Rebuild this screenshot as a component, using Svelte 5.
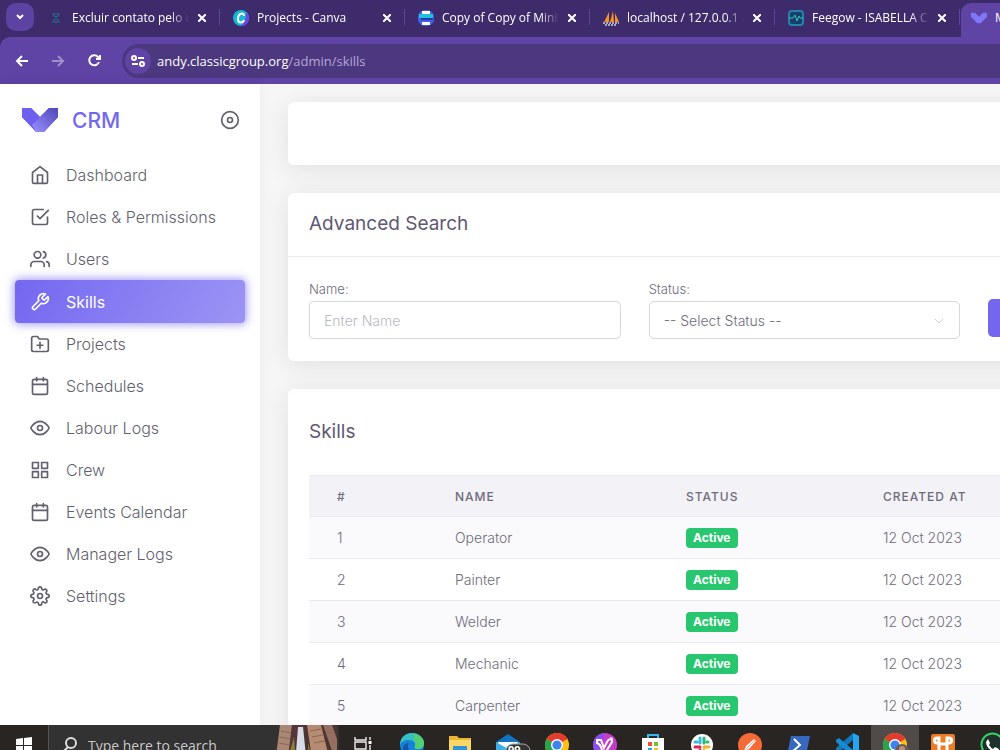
<script>
	let name = '';
	let status = '';
	let search = '';

	const tabs = [
		{ icon: 'strikes', title: 'Excluir contato pelo u' },
		{ icon: 'canva', title: 'Projects - Canva' },
		{ icon: 'printer', title: 'Copy of Copy of Mini' },
		{ icon: 'pma', title: 'localhost / 127.0.0.1 /' },
		{ icon: 'feegow', title: 'Feegow - ISABELLA C' }
	];

	const calendar =
		'<rect x="3" y="4" width="18" height="18" rx="2"/><path d="M16 2v4M8 2v4M3 10h18"/>';
	const eye =
		'<path d="M1 12s4-8 11-8 11 8 11 8-4 8-11 8-11-8-11-8z"/><circle cx="12" cy="12" r="3"/>';

	const menu = [
		{
			label: 'Dashboard',
			icon: '<path d="M3 9l9-7 9 7v11a2 2 0 0 1-2 2H5a2 2 0 0 1-2-2z"/><path d="M9 22V12h6v10"/>'
		},
		{
			label: 'Roles & Permissions',
			icon: '<path d="M9 11l3 3L22 4"/><path d="M21 12v7a2 2 0 0 1-2 2H5a2 2 0 0 1-2-2V5a2 2 0 0 1 2-2h11"/>'
		},
		{
			label: 'Users',
			icon: '<path d="M17 21v-2a4 4 0 0 0-4-4H5a4 4 0 0 0-4 4v2"/><circle cx="9" cy="7" r="4"/><path d="M23 21v-2a4 4 0 0 0-3-3.87M16 3.13a4 4 0 0 1 0 7.75"/>'
		},
		{
			label: 'Skills',
			active: true,
			icon: '<path d="M14.7 6.3a1 1 0 0 0 0 1.4l1.6 1.6a1 1 0 0 0 1.4 0l3.77-3.77a6 6 0 0 1-7.94 7.94l-6.91 6.91a2.12 2.12 0 0 1-3-3l6.91-6.91a6 6 0 0 1 7.94-7.94l-3.76 3.76z"/>'
		},
		{
			label: 'Projects',
			icon: '<path d="M22 19a2 2 0 0 1-2 2H4a2 2 0 0 1-2-2V5a2 2 0 0 1 2-2h5l2 3h9a2 2 0 0 1 2 2z"/><path d="M12 10v7M8.5 13.5h7"/>'
		},
		{ label: 'Schedules', icon: calendar },
		{ label: 'Labour Logs', icon: eye },
		{
			label: 'Crew',
			icon: '<path d="M3 3h7v7H3zM14 3h7v7h-7zM14 14h7v7h-7zM3 14h7v7H3z"/>'
		},
		{ label: 'Events Calendar', icon: calendar },
		{ label: 'Manager Logs', icon: eye },
		{
			label: 'Settings',
			icon: '<circle cx="12" cy="12" r="3"/><path d="M19.4 15a1.65 1.65 0 0 0 .33 1.82l.06.06a2 2 0 1 1-2.83 2.83l-.06-.06a1.65 1.65 0 0 0-2.8 1.17V21a2 2 0 0 1-4 0v-.09A1.65 1.65 0 0 0 9 19.4a1.65 1.65 0 0 0-1.82.33l-.06.06a2 2 0 1 1-2.83-2.83l.06-.06A1.65 1.65 0 0 0 3.09 14H3a2 2 0 0 1 0-4h.09A1.65 1.65 0 0 0 4.6 9a1.65 1.65 0 0 0-.33-1.82l-.06-.06a2 2 0 1 1 2.83-2.83l.06.06A1.65 1.65 0 0 0 9 4.6a1.65 1.65 0 0 0 1-1.51V3a2 2 0 0 1 4 0v.09a1.65 1.65 0 0 0 2.73 1.24l.06-.06a2 2 0 1 1 2.83 2.83l-.06.06A1.65 1.65 0 0 0 19.4 9a1.65 1.65 0 0 0 1.51 1H21a2 2 0 0 1 0 4h-.09a1.65 1.65 0 0 0-1.51 1z"/>'
		}
	];

	const skills = [
		{ id: 1, name: 'Operator', created: '12 Oct 2023' },
		{ id: 2, name: 'Painter', created: '12 Oct 2023' },
		{ id: 3, name: 'Welder', created: '12 Oct 2023' },
		{ id: 4, name: 'Mechanic', created: '12 Oct 2023' },
		{ id: 5, name: 'Carpenter', created: '12 Oct 2023' }
	];

	const chrome =
		'<circle cx="12" cy="12" r="12" fill="#fbc116"/><path d="M12 12L1.6 6A12 12 0 0 1 22.4 6z" fill="#e33b2e"/><path d="M12 0a12 12 0 0 1 10.4 6H12z" fill="#e33b2e"/><path d="M1.6 6A12 12 0 0 0 12 24l5-9-5-3z" fill="#2ba24c"/><circle cx="12" cy="12" r="6" fill="#fff"/><circle cx="12" cy="12" r="4.6" fill="#3f83f0"/>';

	const apps = [
		{
			name: 'Task View',
			icon: '<path d="M4 4v3h11V4M4 21v-3h11v3M4 9h11v7H4zM19 4v3M19 12v9" fill="none" stroke="#eee" stroke-width="1.4"/><path d="M17.500 8h3v3h-3z" fill="#fff"/>'
		},
		{
			name: 'Edge',
			icon: '<circle cx="12" cy="12" r="12" fill="#1683d8"/><path d="M0 12C0 4 6 0 12 0c7 0 12 5 12 10 0 4-3 6-6 6-3 0-4-1-3-3 1-3-2-6-6-6-5 0-8 2-9 5z" fill="#35c1c4"/><path d="M14 1c6 1 10 5 10 9 0 4-3 6-6 6-3 0-4-1-3-3 1-2 1-4-1-6z" fill="#55d070"/><path d="M9 10c-3 4 0 11 9 10-4 4-10 4-13 1-4-4-2-11 4-11z" fill="#1356a5"/>'
		},
		{
			name: 'File Explorer',
			icon: '<path d="M1 3h8l2 2h12v18H1z" fill="#eeb52f"/><path d="M1 7h22v16H1z" fill="#fbd866"/><path d="M5 13h14v10h-3v-5H8v5H5z" fill="#3493d4"/>'
		},
		{
			name: 'Mail',
			icon: '<path d="M0 9L12 1l12 8v14H0z" fill="#1171c2"/><path d="M2 9h20v13H2z" fill="#f6fbff"/><path d="M0 9l12 7 12-7v14H0z" fill="#42aee8"/><rect x="10" y="11" width="24" height="14" rx="7" fill="#333" stroke="#aaa"/><text x="12" y="21" font-size="11" font-weight="700" font-family="Open Sans, sans-serif" fill="#fff">99</text>'
		},
		{ name: 'Chrome', icon: chrome },
		{
			name: 'WPS',
			icon: '<circle cx="12" cy="12" r="12" fill="#c63cc8"/><path d="M12 0a12 12 0 0 0-12 12c0 4 2 7 4 9z" fill="#8650ed"/><path d="M4 7h4l3 8 3-6c2-4 6-3 5 0l-5 8c-2 3-4 3-5 0-1-4-2-6-5-7z" fill="none" stroke="#fff" stroke-width="2"/><path d="M17 4l3 1-1 3z" fill="#fff"/>'
		},
		{
			name: 'Store',
			icon: '<path d="M7 6V2h10v4" fill="none" stroke="#37b6ee" stroke-width="2"/><path d="M1 5h22v15q0 3-3 3H4q-3 0-3-3z" fill="#fff"/><path d="M7 9h4v4H7z" fill="#ee5037"/><path d="M13 9h4v4h-4z" fill="#80bd2c"/><path d="M7 15h4v4H7z" fill="#29a6e8"/><path d="M13 15h4v4h-4z" fill="#fcba26"/>'
		},
		{
			name: 'Slack',
			icon: '<circle cx="12" cy="12" r="11" fill="#fff"/><g stroke-width="3" stroke-linecap="round"><path d="M10 5v5M5 9h2" stroke="#36b9e8"/><path d="M14 5v5M17 9h1" stroke="#2eb67d"/><path d="M14 14h5M14 17v2" stroke="#ecb22e"/><path d="M5 14h5M10 17v2" stroke="#d92558"/></g>'
		},
		{
			name: 'Postman',
			icon: '<circle cx="12" cy="12" r="12" fill="#f46b37"/><path d="M6 18l2-5 8-7 2 2-7 8z" fill="#fff"/><path d="M8 16l9-9" stroke="#f9a586"/>'
		},
		{
			name: 'PowerShell',
			icon: '<path d="M5 3h19l-4 19H1z" fill="#3868bd"/><path d="M8 6l6 6-8 7M13 19h5" fill="none" stroke="#fff" stroke-width="2"/>'
		},
		{
			name: 'VS Code',
			icon: '<path d="M18 0l6 3v18l-6 3z" fill="#27a4ee"/><path d="M18 0v7L4 19l-3-2v-2z" fill="#1178be"/><path d="M18 24v-7L4 5L1 7v2z" fill="#168bd4"/>'
		},
		{
			name: 'Chrome profile',
			active: true,
			icon: chrome + '<circle cx="19" cy="18" r="7" fill="#685b56"/><circle cx="19" cy="16" r="3" fill="#bd8f78"/>'
		},
		{
			name: 'XAMPP',
			icon: '<rect y="1" width="24" height="23" rx="2" fill="#ec7d28"/><path d="M8 10H6a2 2 0 0 1 0-5h2v14M16 10h2a2 2 0 0 0 0-5h-2v14M8 11h8" fill="none" stroke="#fff" stroke-width="3"/>'
		},
		{
			name: 'WhatsApp',
			icon: '<path d="M1 23l2-6a11 11 0 1 1 4 4z" fill="#20302a" stroke="#32d468" stroke-width="2"/><path d="M8 6l2 4-1 2q2 3 4 4l2-2 4 2c-2 7-13 0-13-7z" fill="#fff"/>'
		}
	];
</script>

<div class="screen">
	<header class="browser">
		<div class="tabstrip">
			<button class="tab-search" aria-label="Search tabs">
				<svg width="10" height="10" viewBox="0 0 10 10"><path d="M2 3l3 3 3-3" /></svg>
			</button>
			{#each tabs as tab}
				<div class="tab">
					<svg class="favicon" width="16" height="16" viewBox="0 0 16 16">
						{#if tab.icon === 'strikes'}
							<path d="M4 4h8M5 5l2 2h2l2-2M4 12h8M5 11l2-2h2l2 2" fill="none" stroke="#1a7896" />
						{:else if tab.icon === 'canva'}
							<circle cx="8" cy="8" r="8" fill="#13b8d6" />
							<path d="M13 2a8 8 0 0 1-6 14c5-2 6-8 6-14z" fill="#7540ec" />
							<path d="M11 6c0-4-6-3-6 3 0 5 5 4 6 1" fill="none" stroke="#fff" stroke-width="2" />
						{:else if tab.icon === 'printer'}
							<rect width="16" height="16" rx="7" fill="#465de8" />
							<path d="M1 4h14v4H1z" fill="#20bfdc" />
							<path d="M4 1h8v3H4zM4 12h8v3H4z" fill="#fff" />
							<path d="M3 9h12" stroke="#263ca5" stroke-width="2" />
						{:else if tab.icon === 'pma'}
							<path d="M1 12L6 2v10zM7 12l3-11 1 11zM12 12V3l4 9z" fill="#f29228" />
							<path d="M0 13h16M2 15h12" stroke="#aaa6bc" stroke-width="2" stroke-dasharray="2 1" />
						{:else}
							<rect x="1" y="1" width="14" height="14" rx="3" fill="#173f69" stroke="#2583ab" stroke-width="2" />
							<path d="M1 8h4l2-3 2 6 2-5 1 2h3" fill="none" stroke="#35bfc4" stroke-width="1" />
						{/if}
					</svg>
					<span class="tab-title">{tab.title}</span>
					<button class="tab-close" aria-label="Close tab">
						<svg width="8" height="8" viewBox="0 0 8 8"><path d="M0 0l8 8M8 0L0 8" /></svg>
					</button>
				</div>
			{/each}
			<div class="tab current">
				<svg class="favicon" width="16" height="16" viewBox="0 0 36 36">
					<path d="M0 6h9l9 9 9-9h9v9L22 30h-8L0 15z" fill="#7d78f5" />
				</svg>
				<span class="tab-title">M</span>
			</div>
		</div>

		<div class="toolbar">
			<button aria-label="Back">
				<svg width="16" height="16" viewBox="0 0 16 16"><path d="M14 8H3M8 3L3 8l5 5" /></svg>
			</button>
			<button aria-label="Forward" disabled>
				<svg width="16" height="16" viewBox="0 0 16 16"><path d="M2 8h11M8 3l5 5-5 5" /></svg>
			</button>
			<button aria-label="Reload">
				<svg width="16" height="16" viewBox="0 0 16 16">
					<path d="M13 9a5 5 0 1 1-1-5l2 2M14 2v4h-4" />
				</svg>
			</button>
			<div class="omnibox">
				<button class="site-info" aria-label="View site information">
					<svg width="14" height="14" viewBox="0 0 14 14">
						<circle cx="3" cy="4" r="2" /><path d="M7 4h6M1 10h6" /><circle cx="11" cy="10" r="2" />
					</svg>
				</button>
				<span class="url">andy.classicgroup.org<span class="path">/admin/skills</span></span>
			</div>
		</div>
	</header>

	<div class="page">
		<aside class="sidebar">
			<div class="sidebar-head">
				<a class="brand" href="#home">
					<svg width="36" height="24" viewBox="0 0 36 24">
						<defs>
							<linearGradient id="brand-shade" x1="1" y1="0" x2="0" y2="1">
								<stop offset="0" stop-color="#4f45b5" />
								<stop offset="1" stop-color="#9a92ff" />
							</linearGradient>
						</defs>
						<path d="M0 0h9l9 9 9-9h9v9L22 24h-8L0 9z" fill="#6156d8" />
						<path d="M0 0h9l9 9-8 10L0 9z" fill="#6f5ff0" />
						<path d="M10 17L27 0h9v9L22 24h-8z" fill="url(#brand-shade)" />
					</svg>
					<span>CRM</span>
				</a>
				<button class="pin" aria-label="Toggle menu">
					<svg class="feather" width="20" height="20" viewBox="0 0 24 24">
						<circle cx="12" cy="12" r="10" /><circle cx="12" cy="12" r="3" />
					</svg>
				</button>
			</div>
			<nav>
				{#each menu as item}
					<a class="nav-item" class:active={item.active} href="#{item.label}">
						<svg class="feather" width="20" height="20" viewBox="0 0 24 24">{@html item.icon}</svg>
						<span>{item.label}</span>
					</a>
				{/each}
			</nav>
		</aside>

		<main>
			<div class="content">
				<section class="card blank"></section>

				<section class="card">
					<h4 class="card-header">Advanced Search</h4>
					<form class="filters" on:submit|preventDefault>
						<div class="field">
							<label for="name">Name:</label>
							<input type="text" id="name" placeholder="Enter Name" bind:value={name} />
						</div>
						<div class="field">
							<label for="status">Status:</label>
							<div class="select">
								<select id="status" bind:value={status}>
									<option value="">-- Select Status --</option>
								</select>
								<svg width="10" height="10" viewBox="0 0 10 10"><path d="M1 3l4 4 4-4" /></svg>
							</div>
						</div>
						<button class="btn-search" type="submit" aria-label="Search"></button>
					</form>
				</section>

				<section class="card list">
					<h4>Skills</h4>
					<table>
						<thead>
							<tr>
								<th class="col-id">#</th>
								<th class="col-name">Name</th>
								<th class="col-status">Status</th>
								<th>Created At</th>
							</tr>
						</thead>
						<tbody>
							{#each skills as skill}
								<tr>
									<td>{skill.id}</td>
									<td>{skill.name}</td>
									<td><span class="badge">Active</span></td>
									<td>{skill.created}</td>
								</tr>
							{/each}
						</tbody>
					</table>
				</section>
			</div>
		</main>
	</div>

	<footer class="taskbar">
		<button class="start" aria-label="Start">
			<svg width="16" height="16" viewBox="0 0 16 16">
				<path d="M0 2l7-1v7H0zM8 1l8-1v8H8zM0 9h7v6l-7-1zM8 9h8v7l-8-1z" fill="#fff" />
			</svg>
		</button>
		<div class="search">
			<svg width="16" height="16" viewBox="0 0 16 16">
				<circle cx="9" cy="6" r="5" /><path d="M6 10l-5 5" />
			</svg>
			<input type="text" aria-label="Search" placeholder="Type here to search" bind:value={search} />
			<svg class="highlight" width="62" height="40" viewBox="0 0 62 40">
				<path d="M0 0h62v40H0z" fill="#4b3530" />
				<path d="M0 0h5L0 28z" fill="#323232" />
				<path d="M5 0h12l-3 40H0z" fill="#a98774" />
				<path d="M17 0h13l-2 40H12z" fill="#55343a" />
				<path d="M23 2l5 0 4 38H20z" fill="#d8dce6" />
				<path d="M32 0h14l10 40H38z" fill="#b58b73" />
				<path d="M48 0h9l5 14v26z" fill="#957060" />
				<path d="M14 30l5-18 2 28zM34 40l-1-22 6 22z" fill="#8b8137" />
				<path class="bands" d="M6 6l10 2M5 12l10 2M4 18l10 2M35 6l11-2M37 12l11-2M39 18l11-2M52 8l6-1" />
			</svg>
		</div>
		<div class="apps">
			{#each apps as app}
				<button class="app" class:active={app.active} aria-label={app.name}>
					<svg width="24" height="24" viewBox="0 0 24 24">{@html app.icon}</svg>
				</button>
			{/each}
		</div>
	</footer>
</div>

<style>
	:global(body) {
		margin: 0;
	}
	* {
		box-sizing: border-box;
	}
	button,
	input,
	select {
		font: inherit;
		margin: 0;
	}
	button {
		display: flex;
		align-items: center;
		justify-content: center;
		flex: none;
		padding: 0;
		border: 0;
		background: none;
		cursor: pointer;
	}
	svg {
		flex: none;
	}
	.screen {
		display: flex;
		flex-direction: column;
		height: 100vh;
		overflow: hidden;
		font-family: Inter, sans-serif;
		font-size: 14px;
		font-weight: 300;
		color: #6e6b7b;
	}

	/* browser */
	.browser {
		flex: none;
		font-family: 'Open Sans', sans-serif;
		font-weight: 400;
		color: #fff;
		background: #3e2b6b;
	}
	.browser button svg {
		fill: none;
		stroke: #fff;
		stroke-width: 2;
	}
	.tabstrip {
		display: flex;
		height: 37px;
		overflow: hidden;
		font-size: 12px;
	}
	.tab-search {
		width: 28px;
		height: 28px;
		margin: 3px 2px 0 6px;
		border-radius: 10px;
		background: #5d43a1;
	}
	.tab {
		display: flex;
		align-items: center;
		flex: 0 0 185px;
		min-width: 0;
		gap: 8px;
		padding: 0 14px 2px 12px;
		background: linear-gradient(#5c45a0, #5c45a0) right 1px top 9px / 1px 16px no-repeat;
	}
	.tab-title {
		flex: 1;
		overflow: hidden;
		white-space: nowrap;
		mask-image: linear-gradient(90deg, #000 84%, transparent);
	}
	.browser .tab-close {
		width: 10px;
		height: 16px;
	}
	.tab.current {
		margin-top: 3px;
		padding: 0 14px 5px 10px;
		border-radius: 10px 0 0 0;
		background: #5f43a5;
	}
	.current .tab-title {
		mask-image: none;
	}
	.toolbar {
		display: flex;
		align-items: center;
		height: 47px;
		padding-left: 14px;
		gap: 20px;
		border-radius: 10px 0 0 0;
		background: #5f43a5;
	}
	.toolbar > button {
		width: 16px;
	}
	.toolbar > button:disabled {
		opacity: 0.4;
	}
	.omnibox {
		display: flex;
		align-items: center;
		flex: 1;
		height: 34px;
		padding-left: 3px;
		gap: 6px;
		border-radius: 17px 0 0 17px;
		background: #4c387e;
		font-size: 13px;
	}
	.site-info {
		width: 26px;
		height: 26px;
		border-radius: 13px;
		background: #5f43a5;
	}
	.path {
		color: #b5a6d8;
	}

	/* page */
	.page {
		display: flex;
		flex: 1;
		min-height: 0;
		background: #f6f6f6;
	}
	.sidebar {
		flex: 0 0 260px;
		background: #fff;
		box-shadow: 0 0 15px rgba(34, 41, 47, 0.05);
	}
	.sidebar-head {
		display: flex;
		align-items: center;
		justify-content: space-between;
		height: 70px;
		padding: 2px 20px 0 22px;
	}
	.brand {
		display: flex;
		align-items: center;
		gap: 14px;
		font-size: 21px;
		font-weight: 500;
		color: #7367f0;
		text-decoration: none;
	}
	.feather {
		fill: none;
		stroke: #625f6e;
		stroke-width: 2;
		stroke-linecap: round;
		stroke-linejoin: round;
	}
	.nav-item {
		display: flex;
		align-items: center;
		gap: 16px;
		height: 42px;
		margin: 0 15px;
		padding-left: 15px;
		border-radius: 4px;
		font-size: 16px;
		color: #625f6e;
		text-decoration: none;
	}
	.nav-item.active {
		height: 43px;
		font-weight: 400;
		color: #fff;
		background: linear-gradient(118deg, #7367f0, rgba(115, 103, 240, 0.7));
		box-shadow: 0 0 10px 1px rgba(115, 103, 240, 0.7);
	}
	.nav-item.active .feather {
		stroke: #fff;
	}
	main {
		flex: 1;
		min-width: 0;
		padding: 18px 28px;
		overflow: hidden;
	}
	.content {
		display: flex;
		flex-direction: column;
		gap: 28px;
		min-width: 1033px;
	}
	.card {
		border-radius: 6px;
		background: #fff;
		box-shadow: 0 4px 24px rgba(34, 41, 47, 0.1);
	}
	.blank {
		height: 63px;
	}
	h4 {
		margin: 0;
		font-size: 19px;
		line-height: 22px;
		font-weight: 400;
		color: #5e5873;
	}
	.card-header {
		padding: 20px 21px 21px;
		border-bottom: 1px solid #ebe9f1;
	}
	.filters {
		display: grid;
		grid-template-columns: repeat(3, 1fr);
		gap: 28px;
		padding: 22px 21px;
	}
	.field label {
		display: block;
		height: 22px;
		font-size: 13px;
		line-height: 20px;
	}
	.field input,
	.field select {
		display: block;
		width: 100%;
		height: 38px;
		padding: 0 14px;
		border: 1px solid #d8d6de;
		border-radius: 5px;
		color: #6e6b7b;
		background: #fff;
		appearance: none;
	}
	.field input::placeholder {
		color: #b9b9c3;
	}
	.select {
		position: relative;
	}
	.select svg {
		position: absolute;
		top: 15px;
		right: 16px;
		fill: none;
		stroke: #d0ced8;
	}
	.btn-search {
		width: 120px;
		height: 38px;
		margin-top: 20px;
		border-radius: 5px;
		background: #7367f0;
	}
	.list {
		padding: 32px 21px;
	}
	table {
		width: 100%;
		margin-top: 32px;
		border-collapse: collapse;
		table-layout: fixed;
	}
	th,
	td {
		height: 42px;
		padding: 0 28px;
		border-bottom: 1px solid #ebe9f1;
		text-align: left;
	}
	th {
		height: 41px;
		border-top: 1px solid #ebe9f1;
		font-size: 12px;
		font-weight: 500;
		letter-spacing: 1px;
		text-transform: uppercase;
		background: #f3f2f7;
	}
	.col-id {
		width: 118px;
	}
	.col-name {
		width: 231px;
	}
	.col-status {
		width: 197px;
	}
	tbody tr:nth-child(odd) {
		background: #fafafc;
	}
	.badge {
		display: inline-block;
		padding: 0 7px;
		border-radius: 4px;
		font-size: 12px;
		line-height: 20px;
		font-weight: 700;
		color: #fff;
		background: #28c76f;
	}

	/* taskbar */
	.taskbar {
		display: flex;
		flex: none;
		height: 25px;
		overflow: hidden;
		background: #282522;
	}
	.start {
		width: 48px;
		height: 40px;
	}
	/* the last app runs past the edge of the window */
	.apps {
		display: flex;
		flex: 1;
		margin-right: -16px;
	}
	.app {
		flex: 1;
		height: 40px;
	}
	.app svg {
		overflow: visible;
	}
	.app.active {
		background: #504b48;
	}
	.search {
		display: flex;
		align-items: center;
		flex: 0 0 290px;
		height: 40px;
		padding: 0 2px 0 13px;
		gap: 10px;
		border-left: 1px solid #55524f;
		background: #323232;
	}
	.search svg {
		fill: none;
		stroke: #ddd;
		stroke-width: 2;
	}
	.search .highlight {
		stroke: none;
	}
	.bands {
		stroke: #8a6754;
		stroke-width: 1;
	}
	.search input {
		flex: 1;
		min-width: 0;
		padding: 0;
		border: 0;
		font-family: 'Open Sans', sans-serif;
		font-size: 14px;
		font-weight: 400;
		color: #fff;
		background: none;
	}
	.search input::placeholder {
		color: #c8c8c8;
	}
</style>
